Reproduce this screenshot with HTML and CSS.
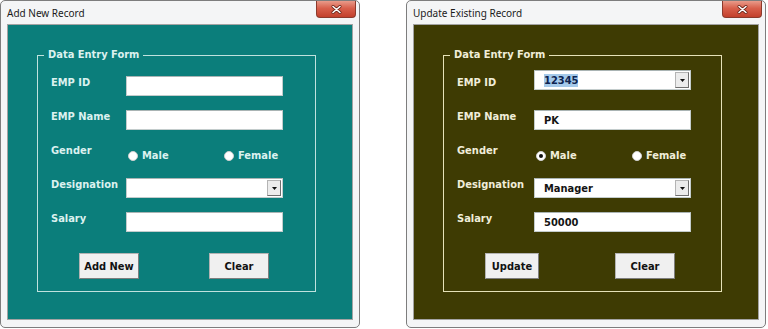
FILE: index.html
```html
<!DOCTYPE html>
<html lang="en">
<head>
<meta charset="utf-8">
<title>Data Entry Forms</title>
<link rel="stylesheet" href="styles.css">
</head>
<body>
<div class="desktop">
  <section class="window window--teal">
    <header class="titlebar">
      <span class="title">Add New Record</span>
      <span class="close" aria-label="Close">
        <svg width="11" height="9" viewBox="0 0 11 9"><path d="M2 1.5 L9 7.5 M9 1.5 L2 7.5" stroke="#6b2418" stroke-width="3" stroke-linecap="round"/><path d="M2 1.5 L9 7.5 M9 1.5 L2 7.5" stroke="#fff" stroke-width="1.6" stroke-linecap="round"/></svg>
      </span>
    </header>
    <div class="client">
      <fieldset class="group">
        <legend class="legend">Data Entry Form</legend>
        <div class="row"><span class="label">EMP ID</span><div class="field"></div></div>
        <div class="row"><span class="label">EMP Name</span><div class="field"></div></div>
        <div class="row">
          <span class="label">Gender</span>
          <div class="radios">
            <span class="option"><span class="dot"></span>Male</span>
            <span class="option"><span class="dot"></span>Female</span>
          </div>
        </div>
        <div class="row">
          <span class="label">Designation</span>
          <div class="field field--combo"><span class="drop"><svg width="5" height="3" viewBox="0 0 5 3"><path d="M0 0 H5 L2.5 3 Z" fill="#111"/></svg></span></div>
        </div>
        <div class="row"><span class="label">Salary</span><div class="field"></div></div>
        <div class="actions">
          <button class="btn btn--wide" type="button">Add New</button>
          <button class="btn btn--wide" type="button">Clear</button>
        </div>
      </fieldset>
    </div>
  </section>

  <section class="window window--olive">
    <header class="titlebar">
      <span class="title">Update Existing Record</span>
      <span class="close" aria-label="Close">
        <svg width="11" height="9" viewBox="0 0 11 9"><path d="M2 1.5 L9 7.5 M9 1.5 L2 7.5" stroke="#6b2418" stroke-width="3" stroke-linecap="round"/><path d="M2 1.5 L9 7.5 M9 1.5 L2 7.5" stroke="#fff" stroke-width="1.6" stroke-linecap="round"/></svg>
      </span>
    </header>
    <div class="client">
      <fieldset class="group">
        <legend class="legend">Data Entry Form</legend>
        <div class="row">
          <span class="label">EMP ID</span>
          <div class="field field--combo field--raised"><span class="selected">12345</span><span class="drop"><svg width="5" height="3" viewBox="0 0 5 3"><path d="M0 0 H5 L2.5 3 Z" fill="#111"/></svg></span></div>
        </div>
        <div class="row"><span class="label">EMP Name</span><div class="field">PK</div></div>
        <div class="row">
          <span class="label">Gender</span>
          <div class="radios">
            <span class="option"><span class="dot dot--on"></span>Male</span>
            <span class="option"><span class="dot"></span>Female</span>
          </div>
        </div>
        <div class="row">
          <span class="label">Designation</span>
          <div class="field field--combo">Manager<span class="drop"><svg width="5" height="3" viewBox="0 0 5 3"><path d="M0 0 H5 L2.5 3 Z" fill="#111"/></svg></span></div>
        </div>
        <div class="row"><span class="label">Salary</span><div class="field">50000</div></div>
        <div class="actions">
          <button class="btn btn--update" type="button">Update</button>
          <button class="btn btn--wide" type="button">Clear</button>
        </div>
      </fieldset>
    </div>
  </section>
</div>
</body>
</html>
```

FILE: styles.css
```css
* { box-sizing: border-box; }

body {
  margin: 0;
  background: #ffffff;
  font-family: "DejaVu Sans", "Liberation Sans", sans-serif;
}

.desktop {
  display: flex;
  gap: 46px;
  height: 329px;
}

.window {
  width: 360px;
  height: 328px;
  display: flex;
  flex-direction: column;
  background: #f4f5f6;
  border: 1px solid #7d7d7d;
  border-radius: 5px;
  padding: 0 6px 7px 6px;
}

.titlebar {
  height: 23px;
  display: flex;
  justify-content: space-between;
  align-items: flex-start;
}

.title {
  font-family: "Noto Sans", "Open Sans", sans-serif;
  font-size: 10px;
  line-height: 12px;
  margin-top: 6px;
  color: #1b1b1b;
}

.close {
  width: 40px;
  height: 17px;
  margin-right: -3px;
  display: flex;
  align-items: center;
  justify-content: center;
  background: linear-gradient(#e99b8a 0%, #d8604c 45%, #c2402c 100%);
  border: 1px solid #8c3a2c;
  border-top: none;
  border-radius: 0 0 4px 4px;
}

.client {
  flex: 1;
  border: 1px solid #a3a3a3;
  padding: 23px 0 0 29px;
}

.window--teal .client { background: #0b7e7b; }
.window--olive .client { background: #3e3b03; }

.group {
  width: 279px;
  margin: 0;
  padding: 14px 10px 12px 13px;
  border: 1px solid;
}
.window--teal .group { border-color: #bfe2de; }
.window--olive .group { border-color: #e6e2b8; }

.legend {
  margin-left: -7px;
  padding: 0 4px;
  font-size: 11px;
  line-height: 14px;
  font-weight: bold;
  font-stretch: condensed;
}

.window--teal .legend,
.window--teal .label,
.window--teal .option { color: #dbf1ef; }
.window--olive .legend,
.window--olive .label,
.window--olive .option { color: #f0edd9; }

.row {
  display: grid;
  grid-template-columns: 75px 157px;
  height: 20px;
  margin-bottom: 14px;
}
.window--olive .row { grid-template-columns: 77px 157px; }

.label {
  font-size: 11px;
  line-height: 14px;
  font-weight: bold;
  font-stretch: condensed;
  white-space: nowrap;
}

.field {
  height: 20px;
  display: flex;
  align-items: center;
  background: #ffffff;
  border: 1px solid #c3cccc;
  border-top-color: #aab4b4;
  padding-left: 9px;
  font-size: 11px;
  font-weight: bold;
  font-stretch: condensed;
  color: #141414;
}

.field--raised { margin-top: -6px; }

.selected {
  background: #a4c9ea;
  color: #0d2350;
  line-height: 13px;
}

.drop {
  margin-left: auto;
  margin-right: 1px;
  width: 14px;
  height: 16px;
  display: flex;
  align-items: center;
  justify-content: center;
  background: #ececec;
  border: 1px solid #b4b4b4;
  border-right-color: #6f6f6f;
  border-bottom-color: #6f6f6f;
}

.radios {
  display: flex;
  margin-top: 4px;
  padding-left: 2px;
}

.option {
  flex: 0 0 96px;
  display: flex;
  align-items: center;
  gap: 4px;
  font-size: 11px;
  line-height: 14px;
  font-weight: bold;
  font-stretch: condensed;
  white-space: nowrap;
}

.dot {
  width: 10px;
  height: 10px;
  border-radius: 50%;
  background: #ffffff;
  border: 1px solid #d0d0d0;
  display: flex;
  align-items: center;
  justify-content: center;
}

.dot--on::after {
  content: "";
  width: 4px;
  height: 4px;
  border-radius: 50%;
  background: #111;
}

.actions {
  display: grid;
  grid-template-columns: 130px auto;
  justify-items: start;
  margin-top: 21px;
  padding-left: 28px;
}

.btn {
  height: 26px;
  padding: 0;
  background: #f0f0f0;
  border: 1px solid #b3b3b3;
  border-right-color: #7e7e7e;
  border-bottom-color: #7e7e7e;
  font-family: "DejaVu Sans", "Liberation Sans", sans-serif;
  font-size: 11px;
  font-weight: bold;
  font-stretch: condensed;
  color: #121212;
}

.btn--wide { width: 60px; }
.btn--update { width: 54px; }
```
